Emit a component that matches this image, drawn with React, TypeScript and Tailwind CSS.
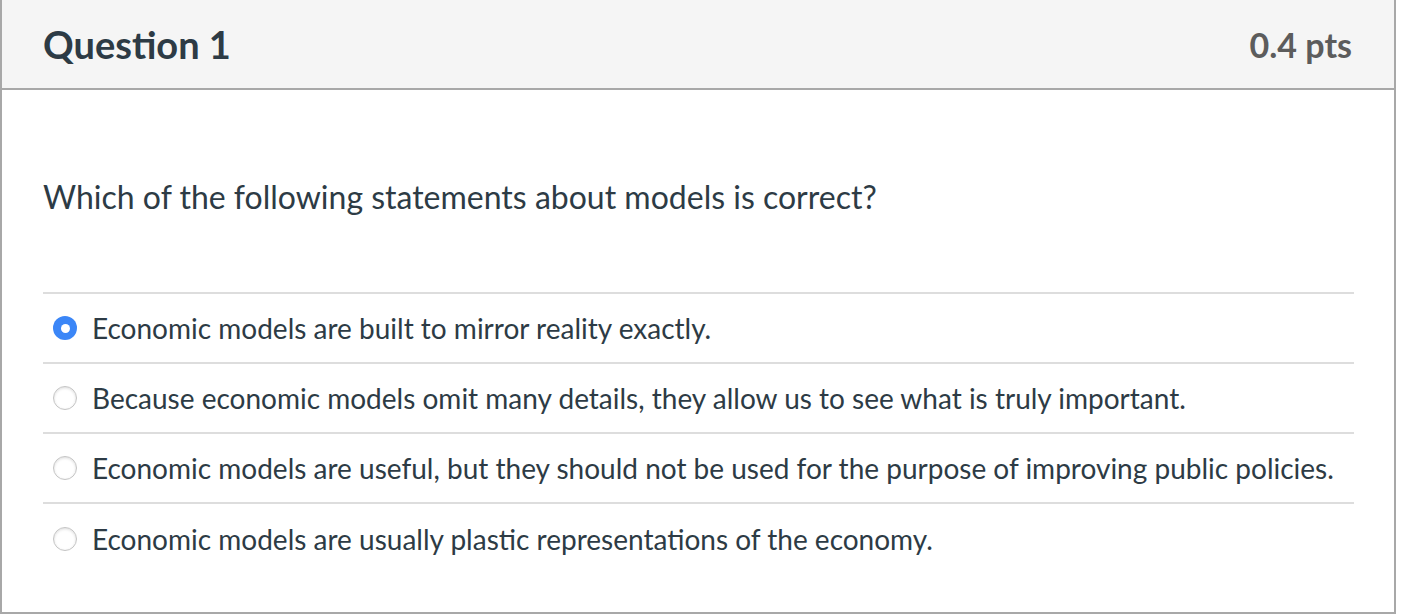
import React from 'react';

const answers = [
  'Economic models are built to mirror reality exactly.',
  'Because economic models omit many details, they allow us to see what is truly important.',
  'Economic models are useful, but they should not be used for the purpose of improving public policies.',
  'Economic models are usually plastic representations of the economy.',
];

export default function App() {
  const selected = 0;

  return (
    <div className="w-[1402px] h-[614px] bg-white" style={{ fontFamily: 'Lato, "Open Sans", sans-serif' }}>
      <div className="w-[1396px] h-[614px] border-x-2 border-b-2 border-[#a8a8a8] flex flex-col">
        <div className="h-[90px] shrink-0 bg-[#f5f5f5] border-b-2 border-[#a8a8a8] flex items-center justify-between pl-[41px] pr-[42px]">
          <h2 className="text-[38px] font-bold text-[#2d3b45] leading-none">Question 1</h2>
          <span className="text-[34px] font-bold text-[#5c5c5c] leading-none pt-[2px]">0.4 pts</span>
        </div>

        <div className="pl-[41px] pr-[40px]">
          <p className="pt-[91px] text-[32px] text-[#2d3b45] leading-none">
            Which of the following statements about models is correct?
          </p>

          <div className="mt-[79px] border-t-2 border-[#dddddd]">
            {answers.map((a, i) => (
              <div
                key={i}
                className="h-[70px] flex items-center gap-[15px] border-b-2 border-[#dddddd] pl-[10px] last:border-b-0"
              >
                {i === selected ? (
                  <span className="w-[24px] h-[24px] rounded-full bg-[#3b86f7] flex items-center justify-center shrink-0">
                    <span className="w-[9px] h-[9px] rounded-full bg-white" />
                  </span>
                ) : (
                  <span className="w-[24px] h-[24px] rounded-full bg-white border border-[#c4c4c4] shadow-[inset_0_1px_3px_rgba(0,0,0,0.14)] shrink-0" />
                )}
                <span className="text-[28px] text-[#2d3b45] leading-none">{a}</span>
              </div>
            ))}
          </div>
        </div>
      </div>
    </div>
  );
}
